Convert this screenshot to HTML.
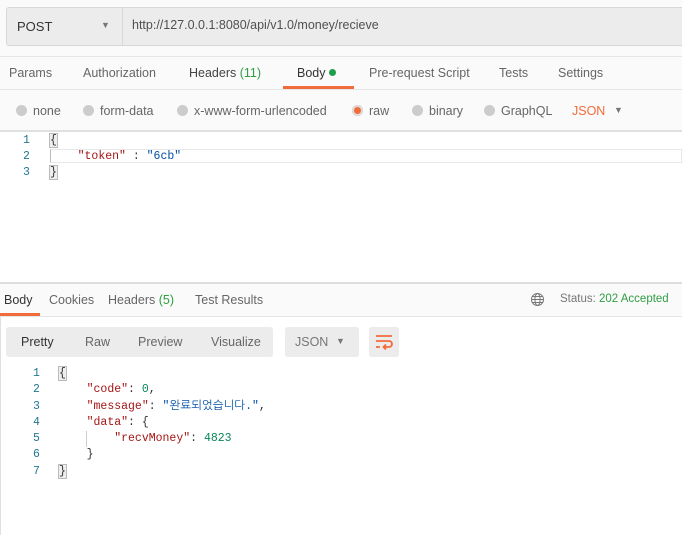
<!DOCTYPE html>
<html><head><meta charset="utf-8"><style>
*{margin:0;padding:0;box-sizing:border-box}
body{width:682px;height:535px;overflow:hidden;background:#fff;font-family:"Liberation Sans","NanumGothic",sans-serif;font-size:12.5px;color:#505050;position:relative}
.a{position:absolute;white-space:nowrap}
.mono{font-family:"Liberation Mono","NanumGothic",monospace;font-size:11.5px}
.rad{display:inline-block;width:11px;height:11px;border-radius:50%;background:#ccc;vertical-align:-1px;margin-right:6px}
</style></head><body>
<div class="a" style="left:0;top:0;width:682px;height:130px;background:#fafafa"></div>
<div class="a" style="left:6px;top:7px;width:680px;height:39px;background:#ececec;border:1px solid #d8d8d8;border-radius:3px"></div>
<div class="a" style="left:122px;top:7px;width:1px;height:39px;background:#d8d8d8"></div>
<div class="a" style="left:17px;top:19px;font-size:13px;color:#333">POST</div>
<div class="a" style="left:101px;top:20px;font-size:9px;color:#777">▼</div>
<div class="a" style="left:132px;top:18px;color:#505050">http://127.0.0.1:8080/api/v1.0/money/recieve</div>
<div class="a" style="left:0;top:56px;width:682px;height:1px;background:#e6e6e6"></div>
<div class="a" style="left:9px;top:66px;color:#666">Params</div>
<div class="a" style="left:83px;top:66px;color:#666">Authorization</div>
<div class="a" style="left:189px;top:66px;color:#444">Headers <span style="color:#2f9e44">(11)</span></div>
<div class="a" style="left:297px;top:66px;color:#333">Body <span style="display:inline-block;width:7px;height:7px;border-radius:50%;background:#1e9e48;vertical-align:1px"></span></div>
<div class="a" style="left:283px;top:86px;width:71px;height:3px;background:#f26b3a"></div>
<div class="a" style="left:369px;top:66px;color:#666">Pre-request Script</div>
<div class="a" style="left:499px;top:66px;color:#666">Tests</div>
<div class="a" style="left:558px;top:66px;color:#666">Settings</div>
<div class="a" style="left:0;top:89px;width:682px;height:1px;background:#e6e6e6"></div>
<div class="a" style="left:16px;top:104px;color:#666"><span class="rad"></span>none</div>
<div class="a" style="left:83px;top:104px;color:#666"><span class="rad"></span>form-data</div>
<div class="a" style="left:177px;top:104px;color:#666"><span class="rad"></span>x-www-form-urlencoded</div>
<div class="a" style="left:352px;top:104px;color:#666"><span class="rad" style="background:#f26b3a;box-shadow:inset 0 0 0 2px #ddd"></span>raw</div>
<div class="a" style="left:412px;top:104px;color:#666"><span class="rad"></span>binary</div>
<div class="a" style="left:484px;top:104px;color:#666"><span class="rad"></span>GraphQL</div>
<div class="a" style="left:572px;top:104px;color:#f26b3a">JSON</div>
<div class="a" style="left:614px;top:105px;font-size:9px;color:#777">▼</div>
<div class="a" style="left:0;top:130px;width:682px;height:2px;background:#e0e0e0"></div>
<div class="a" style="left:50px;top:149px;width:632px;height:14px;border:1px solid #e8e8e8;border-left:1px solid #bbb;background:#fff"></div>
<div class="a mono" style="left:23px;top:133px;color:#237893;line-height:16px">1<br>2<br>3</div>
<div class="a mono" style="left:50px;top:133px;line-height:16px;color:#333"><span style="background:#eee;outline:1px solid #bbb">{</span><br>&nbsp;&nbsp;&nbsp;&nbsp;<span style="color:#a31515">"token"</span> : <span style="color:#0451a5">"6cb"</span><br><span style="background:#eee;outline:1px solid #bbb">}</span></div>
<div class="a" style="left:0;top:282px;width:682px;height:35px;background:#fafafa;border-top:2px solid #ddd;border-bottom:1px solid #e6e6e6"></div>
<div class="a" style="left:4px;top:293px;color:#333">Body</div>
<div class="a" style="left:0;top:313px;width:40px;height:3px;background:#f26b3a"></div>
<div class="a" style="left:49px;top:293px;color:#666">Cookies</div>
<div class="a" style="left:108px;top:293px;color:#666">Headers <span style="color:#2f9e44">(5)</span></div>
<div class="a" style="left:195px;top:293px;color:#666">Test Results</div>
<svg class="a" style="left:530px;top:292px" width="15" height="15" viewBox="0 0 15 15" fill="none" stroke="#777" stroke-width="1"><circle cx="7.5" cy="7.5" r="6"/><ellipse cx="7.5" cy="7.5" rx="2.6" ry="6"/><path d="M1.5 7.5h12M2.5 4.5h10M2.5 10.5h10"/></svg>
<div class="a" style="left:560px;top:293px;color:#777;font-size:11.5px">Status: <span style="color:#2f9e44">202 Accepted</span></div>
<div class="a" style="left:0;top:317px;width:1px;height:218px;background:#e0e0e0"></div>
<div class="a" style="left:6px;top:327px;width:267px;height:30px;background:#ececec;border-radius:3px"></div>
<div class="a" style="left:21px;top:335px;color:#333">Pretty</div>
<div class="a" style="left:85px;top:335px;color:#666">Raw</div>
<div class="a" style="left:138px;top:335px;color:#666">Preview</div>
<div class="a" style="left:211px;top:335px;color:#666">Visualize</div>
<div class="a" style="left:285px;top:327px;width:74px;height:30px;background:#ececec;border-radius:3px"></div>
<div class="a" style="left:295px;top:335px;color:#777">JSON</div>
<div class="a" style="left:336px;top:336px;font-size:9px;color:#777">▼</div>
<div class="a" style="left:369px;top:327px;width:30px;height:30px;background:#ececec;border-radius:3px"></div>
<svg class="a" style="left:375px;top:334px" width="18" height="16" viewBox="0 0 18 16" fill="none" stroke="#f26b3a" stroke-width="1.8"><path d="M1 2h16M1 7h13a3 3 0 0 1 0 6H9M11 10.5l-2.5 2.5 2.5 2.5M1 13h4"/></svg>
<div class="a mono" style="left:33px;top:366px;color:#237893;line-height:16.3px">1<br>2<br>3<br>4<br>5<br>6<br>7</div>
<div class="a" style="left:86px;top:431px;width:1px;height:16px;background:#ccc"></div>
<div class="a mono" style="left:59px;top:366px;line-height:16.3px;color:#333"><span style="background:#eee;outline:1px solid #bbb">{</span><br>&nbsp;&nbsp;&nbsp;&nbsp;<span style="color:#a31515">"code"</span>: <span style="color:#098658">0</span>,<br>&nbsp;&nbsp;&nbsp;&nbsp;<span style="color:#a31515">"message"</span>: <span style="color:#0451a5">"완료되었습니다."</span>,<br>&nbsp;&nbsp;&nbsp;&nbsp;<span style="color:#a31515">"data"</span>: {<br>&nbsp;&nbsp;&nbsp;&nbsp;&nbsp;&nbsp;&nbsp;&nbsp;<span style="color:#a31515">"recvMoney"</span>: <span style="color:#098658">4823</span><br>&nbsp;&nbsp;&nbsp;&nbsp;}<br><span style="background:#eee;outline:1px solid #bbb">}</span></div>
</body></html>
